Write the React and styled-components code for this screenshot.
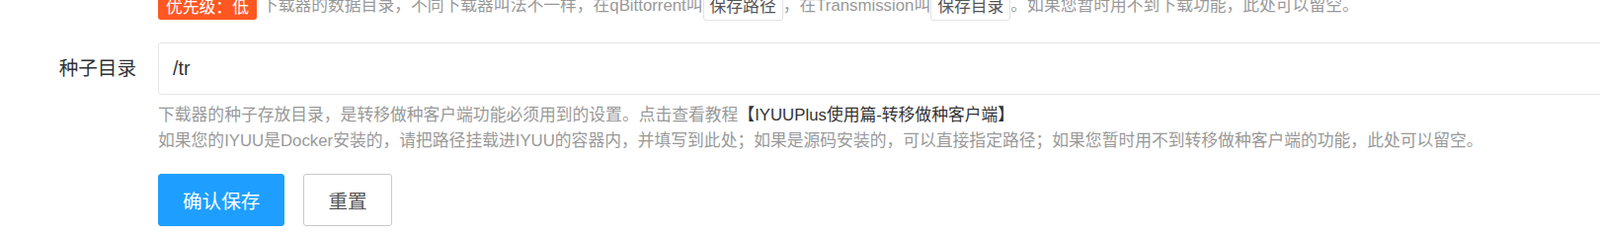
import styled, { createGlobalStyle } from "styled-components";

const GlobalStyle = createGlobalStyle`
  html, body {
    margin: 0;
    padding: 0;
    background: #fff;
    overflow: hidden;
  }
  body {
    font-family: "Liberation Sans", "Noto Sans CJK SC", sans-serif;
    color: #333;
  }
`;

const Page = styled.div`
  width: 1680px;
  margin-top: -7px;
`;

const AuxRow = styled.div`
  padding-left: 160px;
  font-size: 16.8px;
  line-height: 26px;
  color: #999;
  white-space: nowrap;
`;

const Badge = styled.span`
  display: inline-block;
  vertical-align: middle;
  height: 25px;
  line-height: 25px;
  padding: 0 8px;
  margin-right: 5px;
  background: #ff5722;
  color: #fff;
  font-size: 16.8px;
  border-radius: 3px;
`;

const Code = styled.span`
  display: inline-block;
  vertical-align: middle;
  padding: 3px 6px;
  line-height: 20px;
  border: 1px solid #e2e2e2;
  border-radius: 3px;
  color: #555;
  background: #fff;
`;

const FormItem = styled.div`
  display: flex;
  margin-top: 22px;
`;

const Label = styled.label`
  width: 160px;
  box-sizing: border-box;
  padding-right: 22px;
  text-align: right;
  font-size: 19.6px;
  line-height: 53px;
  color: #333;
`;

const InputBlock = styled.div`
  flex: 1;
`;

const Input = styled.input`
  display: block;
  width: 100%;
  height: 53px;
  box-sizing: border-box;
  padding: 0 14px;
  border: 1px solid #e6e6e6;
  border-radius: 3px;
  font-family: inherit;
  font-size: 19.6px;
  color: #333;
  outline: none;
`;

const Help = styled.div`
  margin: 8px 0 0 160px;
  font-size: 16.8px;
  line-height: 26px;
  color: #999;
  white-space: nowrap;
`;

const Link = styled.a`
  color: #333;
  text-decoration: none;
`;

const ButtonRow = styled.div`
  display: flex;
  gap: 19px;
  margin: 20px 0 0 160px;
`;

const Button = styled.button`
  height: 53px;
  padding: 0 24px;
  font-family: inherit;
  font-size: 19.6px;
  border-radius: 3px;
  cursor: pointer;
  border: 1px solid ${({ $primary }) => ($primary ? "#1e9fff" : "#c9c9c9")};
  background: ${({ $primary }) => ($primary ? "#1e9fff" : "#fff")};
  color: ${({ $primary }) => ($primary ? "#fff" : "#555")};
`;

export default function App() {
  return (
    <>
      <GlobalStyle />
      <Page>
        <AuxRow>
          <Badge>优先级：低</Badge>
          下载器的数据目录，不同下载器叫法不一样，在qBittorrent叫
          <Code>保存路径</Code>，在Transmission叫<Code>保存目录</Code>
          。如果您暂时用不到下载功能，此处可以留空。
        </AuxRow>
        <FormItem>
          <Label>种子目录</Label>
          <InputBlock>
            <Input defaultValue="/tr" />
          </InputBlock>
        </FormItem>
        <Help>
          下载器的种子存放目录，是转移做种客户端功能必须用到的设置。点击查看教程
          <Link href="#">【IYUUPlus使用篇-转移做种客户端】</Link>
          <br />
          如果您的IYUU是Docker安装的，请把路径挂载进IYUU的容器内，并填写到此处；如果是源码安装的，可以直接指定路径；如果您暂时用不到转移做种客户端的功能，此处可以留空。
        </Help>
        <ButtonRow>
          <Button $primary>确认保存</Button>
          <Button>重置</Button>
        </ButtonRow>
      </Page>
    </>
  );
}
